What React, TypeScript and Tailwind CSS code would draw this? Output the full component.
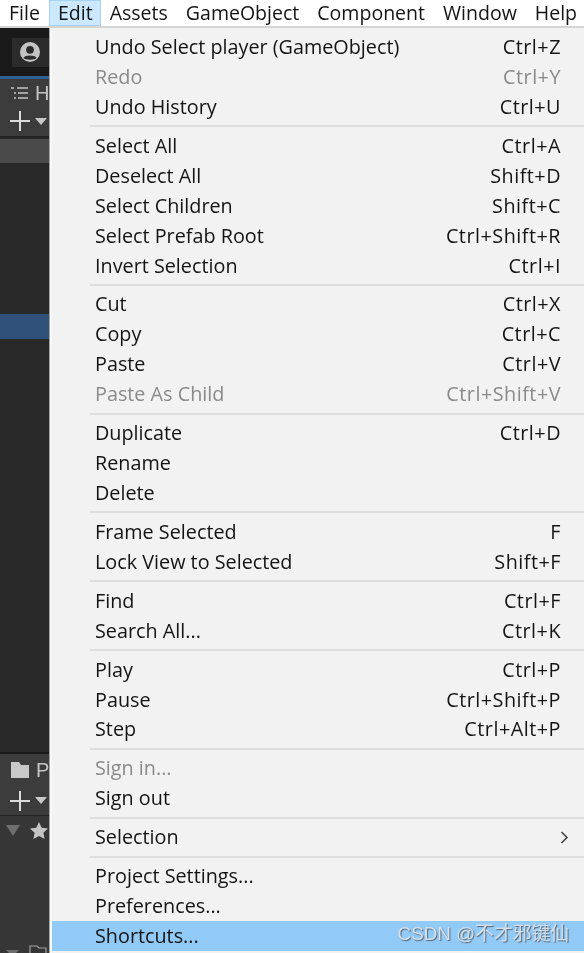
import React from "react";

type Item = { label: string; shortcut?: string; disabled?: boolean; arrow?: boolean; active?: boolean };

const groups: Item[][] = [
  [
    { label: "Undo Select player (GameObject)", shortcut: "Ctrl+Z" },
    { label: "Redo", shortcut: "Ctrl+Y", disabled: true },
    { label: "Undo History", shortcut: "Ctrl+U" },
  ],
  [
    { label: "Select All", shortcut: "Ctrl+A" },
    { label: "Deselect All", shortcut: "Shift+D" },
    { label: "Select Children", shortcut: "Shift+C" },
    { label: "Select Prefab Root", shortcut: "Ctrl+Shift+R" },
    { label: "Invert Selection", shortcut: "Ctrl+I" },
  ],
  [
    { label: "Cut", shortcut: "Ctrl+X" },
    { label: "Copy", shortcut: "Ctrl+C" },
    { label: "Paste", shortcut: "Ctrl+V" },
    { label: "Paste As Child", shortcut: "Ctrl+Shift+V", disabled: true },
  ],
  [
    { label: "Duplicate", shortcut: "Ctrl+D" },
    { label: "Rename" },
    { label: "Delete" },
  ],
  [
    { label: "Frame Selected", shortcut: "F" },
    { label: "Lock View to Selected", shortcut: "Shift+F" },
  ],
  [
    { label: "Find", shortcut: "Ctrl+F" },
    { label: "Search All...", shortcut: "Ctrl+K" },
  ],
  [
    { label: "Play", shortcut: "Ctrl+P" },
    { label: "Pause", shortcut: "Ctrl+Shift+P" },
    { label: "Step", shortcut: "Ctrl+Alt+P" },
  ],
  [{ label: "Sign in...", disabled: true }, { label: "Sign out" }],
  [{ label: "Selection", arrow: true }],
  [
    { label: "Project Settings..." },
    { label: "Preferences..." },
    { label: "Shortcuts...", active: true },
  ],
];

const menus = ["File", "Edit", "Assets", "GameObject", "Component", "Window", "Help"];

function Plus() {
  return (
    <div className="flex items-center gap-[5px] pl-[10px]">
      <svg width="20" height="20" viewBox="0 0 20 20" fill="none" stroke="#dcdcdc" strokeWidth="2" className="shrink-0">
        <path d="M10 0v20M0 10h20" />
      </svg>
      <svg width="12" height="7" viewBox="0 0 12 7" fill="#c8c8c8" className="shrink-0">
        <path d="M0 0h12L6 7z" />
      </svg>
    </div>
  );
}

function MenuRow({ item }: { item: Item }) {
  return (
    <div
      className={`flex h-[29.93px] items-center justify-between pl-[43px] pr-[23px] ${
        item.active ? "bg-[#91c9f7]" : ""
      } ${item.disabled ? "text-[#8a8a8a]" : "text-[#141414]"}`}
    >
      <span>{item.label}</span>
      {item.shortcut && <span className="tracking-[0.5px]">{item.shortcut}</span>}
      {item.arrow && (
        <svg width="9" height="13" viewBox="0 0 9 13" fill="none" stroke="#444" strokeWidth="1.6" className="-mr-[8px]">
          <path d="M1.500 1l5.500 5.500L1.500 12" />
        </svg>
      )}
    </div>
  );
}

export default function App() {
  return (
    <div className="relative flex h-[953px] w-[584px] flex-col overflow-hidden bg-white font-['Open_Sans',sans-serif] text-[19.8px] leading-none blur-[0.35px]">
      <div className="flex h-[28px] shrink-0 items-stretch border-b-2 border-[#d4d4d4] bg-white text-[19.55px] text-[#141414]">
        {menus.map((m) => (
          <div
            key={m}
            className={`flex items-center ${
              m === "Edit" ? "border border-[#a8d2f2] bg-[#cce8ff] pl-[8px] pr-[7px]" : "px-[9px]"
            }`}
          >
            {m}
          </div>
        ))}
      </div>
      <div className="flex min-h-0 flex-1">
        <aside className="flex w-[49px] shrink-0 flex-col overflow-hidden bg-[#282828] text-[#c4c4c4]">
          <div className="flex h-[48px] shrink-0 items-center bg-[#191919] pl-[12px]">
            <div className="flex h-[29px] w-[37px] items-center justify-center bg-[#2b2b2b] pr-[2px]">
              <svg width="20" height="20" viewBox="0 0 18 18">
                <circle cx="9" cy="9" r="9" fill="#c4c4c4" />
                <circle cx="9" cy="7" r="3.500" fill="#2b2b2b" />
                <path d="M3 14.500c1.500-3 10.500-3 12 0-2 2-10 2-12 0z" fill="#2b2b2b" />
              </svg>
            </div>
          </div>
          <div className="flex h-[30px] shrink-0 items-center gap-[7px] border-t-[3px] border-[#2f5f91] bg-[#3c3c3c] pl-[11px] text-[20px] font-['Liberation_Sans',sans-serif]">
            <svg width="17" height="14" viewBox="0 0 17 14" fill="none" stroke="#c4c4c4" strokeWidth="1.500" className="shrink-0">
              <path d="M0 2h3M6 2h11M3 7h2M7 7h10M3 12h2M7 12h10" />
            </svg>
            <span>H</span>
          </div>
          <div className="flex h-[31px] shrink-0 items-center border-b border-[#222] bg-[#3c3c3c]">
            <Plus />
          </div>
          <div className="mt-[2px] h-[24px] shrink-0 bg-[#4a4a4a]" />
          <div className="h-[151px] shrink-0" />
          <div className="h-[25px] shrink-0 bg-[#2f5079]" />
          <div className="h-[413px] shrink-0" />
          <div className="h-[2px] shrink-0 bg-[#191919]" />
          <div className="flex h-[32px] shrink-0 items-center gap-[7px] bg-[#3c3c3c] pl-[11px] text-[20px] font-['Liberation_Sans',sans-serif]">
            <svg width="18" height="16" viewBox="0 0 18 16" fill="#c8c8c8" className="shrink-0">
              <path d="M0 0h8l2 3h8v13H0z" />
            </svg>
            <span>P</span>
          </div>
          <div className="flex h-[30px] shrink-0 items-center border-b border-[#222] bg-[#3c3c3c]">
            <Plus />
          </div>
          <div className="flex flex-1 flex-col justify-between bg-[#363636]">
            <div className="flex h-[29px] shrink-0 items-center gap-[10px] pl-[6px]">
              <svg width="14" height="11" viewBox="0 0 14 11" fill="#6e6e6e" className="shrink-0">
                <path d="M0 0h14L7 11z" />
              </svg>
              <svg width="18" height="17" viewBox="0 0 18 17" fill="#c4c4c4" className="shrink-0">
                <path d="M9 0l2.700 5.700 6.300.8-4.600 4.300 1.200 6.200L9 14l-5.600 3 1.200-6.200L0 6.500l6.300-.8z" />
              </svg>
            </div>
            <div className="flex h-[8px] shrink-0 items-end gap-[10px] pl-[6px]">
              <svg width="13" height="3" viewBox="0 0 13 3" fill="#6e6e6e" className="shrink-0">
                <path d="M0 0h13l-3 3H3z" />
              </svg>
              <svg width="18" height="8" viewBox="0 0 18 8" fill="none" stroke="#a0a0a0" strokeWidth="1.200" className="shrink-0">
                <path d="M1 8V1h7l2 2h7v5" />
              </svg>
            </div>
          </div>
        </aside>
        <main className="flex min-w-0 flex-1 flex-col border-l border-[#a6a6a6] bg-[#f2f2f2]">
          <div className="flex h-full flex-col border-l-2 border-[#f8f8f8] pt-[4px]">
            {groups.map((g, i) => (
              <section key={i}>
                {i > 0 && (
                  <div className="flex h-[9px] items-center pl-[38px]">
                    <div className="h-[2px] w-full bg-[#dedede]" />
                  </div>
                )}
                {g.map((it) => (
                  <MenuRow key={it.label} item={it} />
                ))}
              </section>
            ))}
          </div>
        </main>
      </div>
      <div className="absolute bottom-[9px] right-[15px] font-['Liberation_Sans','Noto_Sans_CJK_SC',sans-serif] text-[18.8px] text-[#d4e0ea] [text-shadow:1px_1px_1px_#566675]">
        CSDN @不才邪键仙
      </div>
    </div>
  );
}
